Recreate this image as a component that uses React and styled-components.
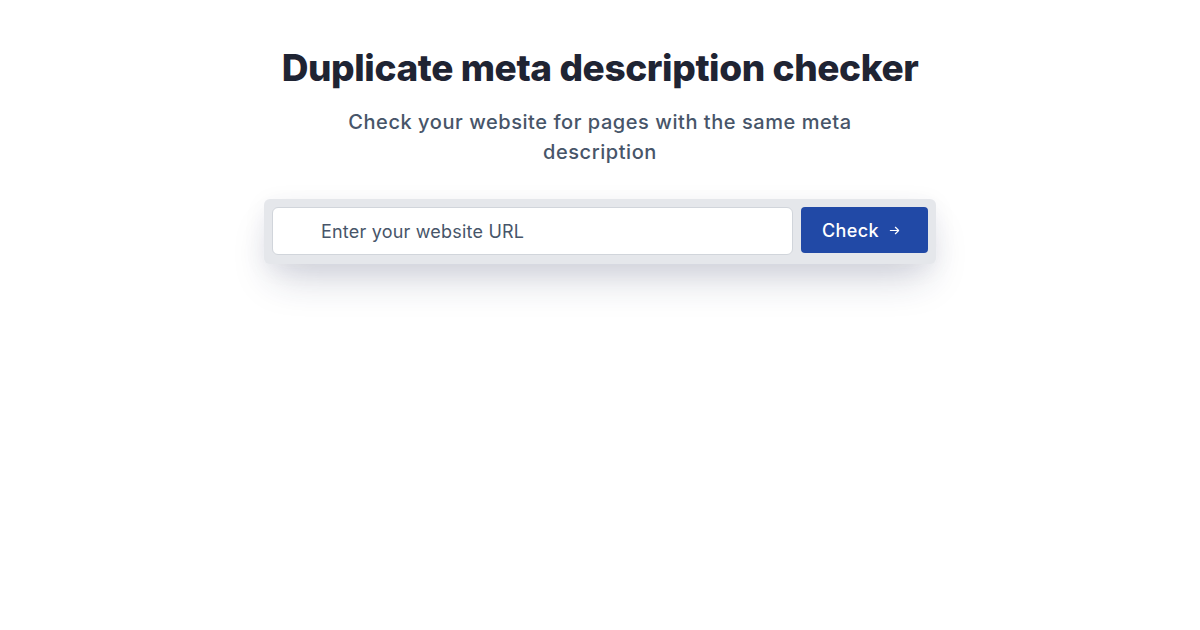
import styled, { createGlobalStyle } from "styled-components";

const GlobalStyle = createGlobalStyle`
    body {
        margin: 0;
        background: #ffffff;
        font-family: Inter, "Noto Sans", sans-serif;
    }
`;

const Page = styled.main`
    min-height: 100vh;
    box-sizing: border-box;
    display: flex;
    flex-direction: column;
    align-items: center;
    padding-top: 45px;
`;

const Title = styled.h1`
    margin: 0;
    font-size: 37px;
    line-height: 46px;
    font-weight: 800;
    letter-spacing: -0.4px;
    color: #1f2433;
`;

const Subtitle = styled.p`
    margin: 16px 0 0;
    max-width: 540px;
    text-align: center;
    font-size: 20px;
    line-height: 30px;
    font-weight: 500;
    letter-spacing: 0.55px;
    color: #475569;
`;

const SearchBar = styled.form`
    margin-top: 32px;
    width: 672px;
    box-sizing: border-box;
    display: flex;
    align-items: flex-start;
    gap: 8px;
    padding: 8px 8px 9px;
    background: #e5e7eb;
    border-radius: 6px;
    box-shadow: 0 22px 40px -10px rgba(30, 41, 80, 0.22),
        0 4px 24px rgba(30, 41, 80, 0.06);
`;

const UrlInput = styled.input`
    flex: 1;
    height: 48px;
    box-sizing: border-box;
    padding: 0 16px 0 48px;
    border: 1px solid #d1d5db;
    border-radius: 6px;
    background: #ffffff;
    font-family: inherit;
    font-size: 18px;
    letter-spacing: 0.2px;
    color: #1f2433;
    outline: none;
    &::placeholder {
        color: #475569;
    }
`;

const CheckButton = styled.button`
    height: 46px;
    width: 127px;
    display: flex;
    align-items: center;
    justify-content: flex-start;
    gap: 10px;
    padding: 0 0 0 21px;
    border: none;
    border-radius: 4px;
    background: #2149a6;
    color: #ffffff;
    font-family: inherit;
    font-size: 18px;
    font-weight: 500;
    letter-spacing: 0.4px;
    cursor: pointer;
`;

const Arrow = () => (
    <svg width="11" height="11" viewBox="0 0 12 12" fill="none">
        <path
            d="M1.5 6h9M7 2.5 10.5 6 7 9.5"
            stroke="#ffffff"
            strokeWidth="1.3"
            strokeLinecap="round"
            strokeLinejoin="round"
        />
    </svg>
);

const App = () => {
    return (
        <>
            <GlobalStyle />
            <Page>
                <Title>Duplicate meta description checker</Title>
                <Subtitle>
                    Check your website for pages with the same meta description
                </Subtitle>
                <SearchBar onSubmit={(e) => e.preventDefault()}>
                    <UrlInput type="text" placeholder="Enter your website URL" />
                    <CheckButton type="submit">
                        Check
                        <Arrow />
                    </CheckButton>
                </SearchBar>
            </Page>
        </>
    );
};

export default App;
